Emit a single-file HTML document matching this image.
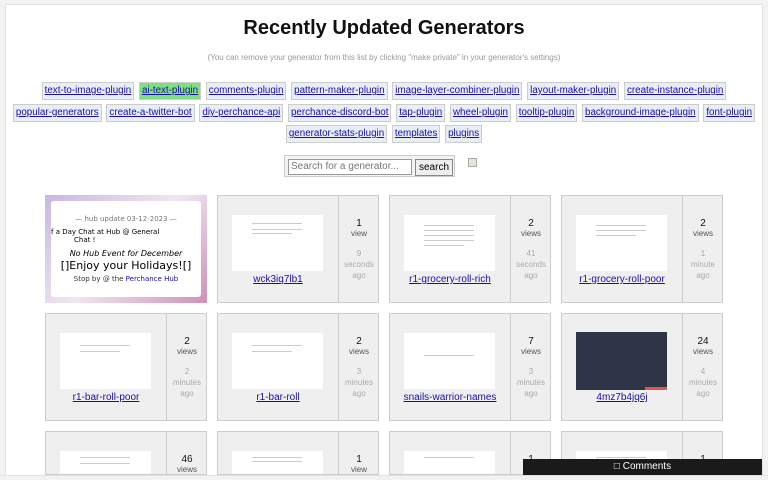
<!DOCTYPE html>
<html><head><style>
*{box-sizing:border-box}
html,body{margin:0;width:768px;height:480px;overflow:hidden}
body{background:#f2f2f2;font-family:"Liberation Sans",sans-serif;position:relative}
#w{position:absolute;left:0;top:0;width:768px;height:480px;overflow:hidden}
.frame{position:absolute;left:5px;top:4px;width:758px;height:472px;background:#fff;border:1px solid #e0e0e0}
h1{position:absolute;top:17px;left:0;width:768px;text-align:center;font-size:20px;margin:0;font-weight:bold;color:#111}
.sub{position:absolute;top:53px;width:768px;text-align:center;font-size:8px;color:#999}
.tags{position:absolute;left:0;width:768px;text-align:center;font-size:9.8px}
.tags a{display:inline-block;background:#e8eef6;border:1px solid #ccc;color:#1a0dab;text-decoration:underline;padding:2px 2px;margin:0 1px;line-height:12px}
.tags a.g{background:#7ee07e}
.search{position:absolute;left:284px;top:155px;width:171px;height:22px;border:1px solid #ccc;background:#f3f3f3}
.search .in{position:absolute;left:3px;top:3px;width:124px;height:16px;border:1px solid #999;background:#fff;font-size:10px;color:#777;padding:1px 2px}
.search .bt{position:absolute;left:130px;top:3px;width:38px;height:17px;border:1px solid #888;background:#eee;font-size:10px;text-align:center;line-height:15px;color:#000}
.card{position:absolute;width:162px;height:108px;background:#efefef;border:1px solid #ccc;overflow:hidden}
.card .th{position:absolute;left:14px;top:19px;width:91px;height:56px;background:#fff}
.card .th i{position:absolute;left:20px;height:1px;background:#ccc;display:block}
.card .nm{position:absolute;left:0;top:78px;width:120px;text-align:center;font-size:10px;color:#1a0dab;text-decoration:underline}
.card .st{position:absolute;left:120px;top:0;width:41px;height:106px;border-left:1px solid #ccc;text-align:center;font-size:8px;color:#555}
.st b{display:block;margin-top:22px;font-size:10px;font-weight:normal;color:#111}
.st .t{color:#aaa;margin-top:10px;line-height:11px}
.hub{position:absolute;left:45px;top:195px;width:162px;height:108px;background:linear-gradient(135deg,#c8b8e0,#f0e6f0,#d090b8);padding:6px}
.hub div{background:#fff;width:100%;height:100%;border-radius:3px;position:relative;font-family:"DejaVu Sans",sans-serif;color:#333;overflow:hidden}
.cm{position:absolute;left:523px;top:459px;width:239px;height:16px;background:#1a1a1a;color:#fff;font-size:10px;text-align:center;line-height:16px}
</style></head><body><div id="w">
<div class="frame"></div>
<h1>Recently Updated Generators</h1>
<div class="sub">(You can remove your generator from this list by clicking "make private" in your generator's settings)</div>
<div class="tags" style="top:82px"><a>text-to-image-plugin</a> <a class="g">ai-text-plugin</a> <a>comments-plugin</a> <a>pattern-maker-plugin</a> <a>image-layer-combiner-plugin</a> <a>layout-maker-plugin</a> <a>create-instance-plugin</a></div>
<div class="tags" style="top:104px"><a>popular-generators</a> <a>create-a-twitter-bot</a> <a>diy-perchance-api</a> <a>perchance-discord-bot</a> <a>tap-plugin</a> <a>wheel-plugin</a> <a>tooltip-plugin</a> <a>background-image-plugin</a> <a>font-plugin</a></div>
<div class="tags" style="top:125px"><a>generator-stats-plugin</a> <a>templates</a> <a>plugins</a></div>
<div class="search"><div class="in">Search for a generator...</div><div class="bt">search</div></div>
<div style="position:absolute;left:468px;top:158px;width:9px;height:9px;border:1px solid #aaa;background:#dfe8d8"></div>

<div class="hub"><div>
<p style="position:absolute;top:14px;width:100%;text-align:center;margin:0;font-size:7px;color:#777">— hub update 03-12-2023 —</p>
<p style="position:absolute;top:27px;left:0;margin:0;font-size:7px;white-space:nowrap;color:#000">f a Day Chat at Hub @ General</p>
<p style="position:absolute;top:35px;left:23px;margin:0;font-size:7px;color:#000">Chat !</p>
<p style="position:absolute;top:48px;width:100%;text-align:center;margin:0;font-size:8px;font-style:italic;color:#000">No Hub Event for December</p>
<p style="position:absolute;top:58px;width:100%;text-align:center;margin:0;font-size:11px;color:#000">[]Enjoy your Holidays![]</p>
<p style="position:absolute;top:74px;width:100%;text-align:center;margin:0;font-size:7px">Stop by @ the <span style="color:#1a0dab">Perchance Hub</span></p>
</div></div>

<div class="card" style="left:217px;top:195px"><div class="th"><i style="top:8px;width:50px"></i><i style="top:14px;width:50px"></i><i style="top:18px;width:40px"></i></div><div class="nm">wck3iq7lb1</div><div class="st"><b>1</b>view<div class="t">9<br>seconds<br>ago</div></div></div>
<div class="card" style="left:389px;top:195px"><div class="th"><i style="top:10px;width:50px"></i><i style="top:15px;width:50px"></i><i style="top:20px;width:50px"></i><i style="top:25px;width:50px"></i><i style="top:30px;width:40px"></i></div><div class="nm">r1-grocery-roll-rich</div><div class="st"><b>2</b>views<div class="t">41<br>seconds<br>ago</div></div></div>
<div class="card" style="left:561px;top:195px"><div class="th"><i style="top:10px;width:50px"></i><i style="top:15px;width:50px"></i><i style="top:20px;width:40px"></i></div><div class="nm">r1-grocery-roll-poor</div><div class="st"><b>2</b>views<div class="t">1<br>minute<br>ago</div></div></div>

<div class="card" style="left:45px;top:313px"><div class="th"><i style="top:12px;width:50px"></i><i style="top:18px;width:40px"></i></div><div class="nm">r1-bar-roll-poor</div><div class="st"><b>2</b>views<div class="t">2<br>minutes<br>ago</div></div></div>
<div class="card" style="left:217px;top:313px"><div class="th"><i style="top:12px;width:50px"></i><i style="top:18px;width:40px"></i></div><div class="nm">r1-bar-roll</div><div class="st"><b>2</b>views<div class="t">3<br>minutes<br>ago</div></div></div>
<div class="card" style="left:389px;top:313px"><div class="th"><i style="top:22px;width:50px"></i></div><div class="nm">snails-warrior-names</div><div class="st"><b>7</b>views<div class="t">3<br>minutes<br>ago</div></div></div>
<div class="card" style="left:561px;top:313px"><div class="th" style="background:#2f3447;top:18px;height:58px"><div style="position:absolute;right:0;bottom:0;width:22px;height:3px;background:#d55"></div></div><div class="nm">4mz7b4jq6j</div><div class="st"><b>24</b>views<div class="t">4<br>minutes<br>ago</div></div></div>

<div class="card" style="left:45px;top:431px;height:44px"><div class="th"><i style="top:6px;width:50px"></i><i style="top:12px;width:50px"></i></div><div class="st"><b>46</b>views</div></div>
<div class="card" style="left:217px;top:431px;height:44px"><div class="th"><i style="top:6px;width:50px"></i><i style="top:10px;width:50px"></i></div><div class="st"><b>1</b>view</div></div>
<div class="card" style="left:389px;top:431px;height:44px"><div class="th"><i style="top:6px;width:50px"></i></div><div class="st"><b>1</b></div></div>
<div class="card" style="left:561px;top:431px;height:44px"><div class="th"><i style="top:6px;width:50px"></i></div><div class="st"><b>1</b></div></div>

<div style="position:absolute;left:0;top:475px;width:768px;height:5px;background:#f2f2f2;border-top:1px solid #e0e0e0"></div>
<div class="cm">&#9633; Comments</div>
</div></body></html>
